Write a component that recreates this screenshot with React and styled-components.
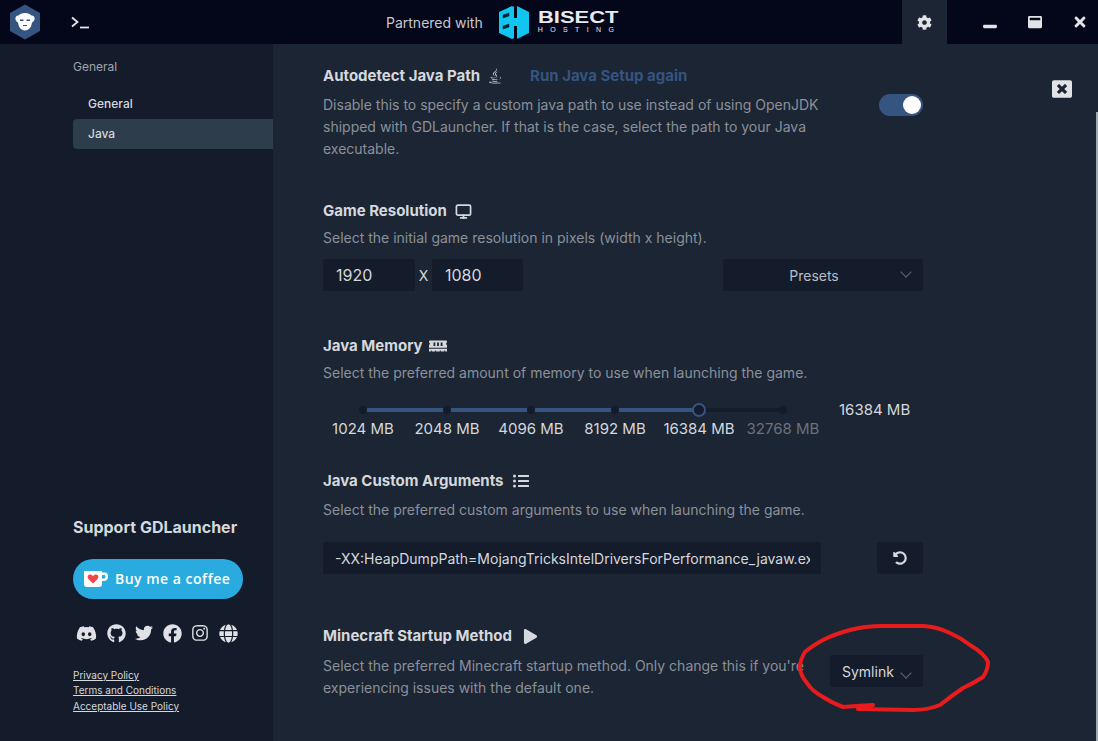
import React from 'react';
import styled, { createGlobalStyle } from 'styled-components';
import {
  FaCog, FaDiscord, FaFacebook, FaGithub, FaGlobe, FaInstagram, FaJava, FaListUl, FaMemory,
  FaPlay, FaTimes, FaTwitter, FaUndoAlt, FaWindowClose, FaWindowMaximize, FaWindowMinimize,
} from 'react-icons/fa';
import { FiMonitor } from 'react-icons/fi';

const GlobalStyle = createGlobalStyle`
  html, body { margin: 0; padding: 0; height: 100%; overflow: hidden; background: #1b2533; }
  * { box-sizing: border-box; }
  #root { height: 100%; font-family: Inter, "Liberation Sans", sans-serif; }
`;

const memorySteps = ['1024 MB', '2048 MB', '4096 MB', '8192 MB', '16384 MB', '32768 MB'];

const App = () => (
  <Page>
    <GlobalStyle />
    <TopBar>
      <TopLeft>
        <Logo />
        <Prompt />
      </TopLeft>
      <Partner>
        <PartnerText>Partnered with</PartnerText>
        <BisectIcon />
        <BisectName>
          <BisectTitle>BISECT</BisectTitle>
          <BisectSub>HOSTING</BisectSub>
        </BisectName>
      </Partner>
      <TopRight>
        <SettingsTab><FaCog size={15} /></SettingsTab>
        <WindowButton><FaWindowMinimize size={14} /></WindowButton>
        <WindowButton><FaWindowMaximize size={14} /></WindowButton>
        <WindowButton><FaTimes size={16} /></WindowButton>
      </TopRight>
    </TopBar>
    <Body>
      <Sidebar>
        <NavGroup>General</NavGroup>
        <NavItem>General</NavItem>
        <NavItem $active>Java</NavItem>
        <SideFooter>
          <SupportTitle>Support GDLauncher</SupportTitle>
          <CoffeeButton><CoffeeIcon />Buy me a coffee</CoffeeButton>
          <Socials>
            <FaDiscord size={21} />
            <FaGithub size={19} />
            <FaTwitter size={18} />
            <FaFacebook size={19} />
            <FaInstagram size={18} />
            <FaGlobe size={19} />
          </Socials>
          <Legal>Privacy Policy</Legal>
          <Legal>Terms and Conditions</Legal>
          <Legal>Acceptable Use Policy</Legal>
        </SideFooter>
      </Sidebar>
      <Main>
        <CloseBox><FaWindowClose size={20} /></CloseBox>
        <Content>
          <Section $height={135}>
            <Title $space={7} $iconGap={7}>Autodetect Java Path <FaJava size={16} /><SetupLink>Run Java Setup again</SetupLink></Title>
            <SplitRow>
              <Description $width={530}>Disable this to specify a custom java path to use instead of using OpenJDK shipped with GDLauncher. If that is the case, select the path to your Java executable.</Description>
              <Toggle><Knob /></Toggle>
            </SplitRow>
          </Section>
          <Section $height={135}>
            <Title $space={5} $iconGap={8}>Game Resolution <FiMonitor size={17} strokeWidth={2.4} /></Title>
            <Description>Select the initial game resolution in pixels (width x height).</Description>
            <ResolutionRow>
              <Field $width={92}>1920</Field>
              <Times>X</Times>
              <Field $width={91}>1080</Field>
              <Presets>Presets<Chevron $top={9} /></Presets>
            </ResolutionRow>
          </Section>
          <Section $height={135}>
            <Title $space={5} $iconGap={6}>Java Memory <FaMemory size={18} /></Title>
            <Description>Select the preferred amount of memory to use when launching the game.</Description>
            <MemoryRow>
              <Slider>
                <Rail />
                <Track />
                {[0, 1, 2, 3, 5].map((i) => <Dot key={i} style={{ left: `${i * 84}px` }} />)}
                <Handle />
                <Marks>
                  {memorySteps.map((m, i) => <Mark key={m} $muted={i === 5} style={{ left: `${i * 84}px` }}>{m}</Mark>)}
                </Marks>
              </Slider>
              <MemoryValue>16384 MB</MemoryValue>
            </MemoryRow>
          </Section>
          <Section $height={155}>
            <Title $space={7} $iconGap={10}>Java Custom Arguments <FaListUl size={16} /></Title>
            <Description>Select the preferred custom arguments to use when launching the game.</Description>
            <ArgsRow>
              <ArgsField readOnly value="-XX:HeapDumpPath=MojangTricksIntelDriversForPerformance_javaw.exe" />
              <UndoButton><FaUndoAlt size={14} /></UndoButton>
            </ArgsRow>
          </Section>
          <Section>
            <Title $space={8} $iconGap={11}>Minecraft Startup Method <FaPlay size={15} /></Title>
            <SplitRow>
              <Description $width={500}>Select the preferred Minecraft startup method. Only change this if you're experiencing issues with the default one.</Description>
              <MethodSelect>Symlink<Chevron $top={14} /></MethodSelect>
            </SplitRow>
          </Section>
        </Content>
        <ScrollThumb />
        <RedCircle viewBox="790 615 210 105" fill="none">
          <path d="M873 705Q855 706 843 707Q832 703 823 697Q812 691 807 683Q800 675 800 667Q800 660 805 652Q812 646 823 640Q835 634 850 630Q865 626 883 626L923 626Q938 627 950 633Q961 638 970 645Q985 654 988 662Q988 670 983 677Q974 683 963 688Q950 697 940 705Q928 710 913 710L858 709" stroke="#e81c1c" strokeWidth="4" strokeLinecap="round" strokeLinejoin="round" />
        </RedCircle>
      </Main>
    </Body>
  </Page>
);

export default App;

const Logo = () => (
  <svg width="32" height="36" viewBox="0 0 32 36">
    <path d="M16 0.5L31 9V27L16 35.5L1 27V9Z" fill="#35547f" />
    <path d="M16 9C12.5 9 11 10 9.5 11.5C7 11.5 6 13.5 6.5 15.5C7 17 8 18 9 18.5C9.5 22 11 26 16 26.5C21 26 22.5 22 23 18.5C24 18 25 17 25.5 15.5C26 13.5 25 11.5 22.5 11.5C21 10 19.5 9 16 9Z" fill="#fff" />
    <path d="M11 15.5H14.5V17H11ZM17.5 15.5H21V17H17.5ZM14 21H18V22H14Z" fill="#35547f" />
  </svg>
);

const Prompt = () => (
  <svg width="18" height="13" viewBox="0 0 18 13" fill="none">
    <path d="M1 1.5L6.5 6L1 10.5" stroke="#e4e6ea" strokeWidth="1.8" />
    <path d="M9 11.5H18" stroke="#e4e6ea" strokeWidth="1.8" />
  </svg>
);

const BisectIcon = () => (
  <svg width="32" height="35" viewBox="0 0 32 35">
    <path d="M14 1L1 7V28L14 34L16 33V21H19V34L31 28V7L19 1V13H16V2Z" fill="#10c5ef" />
    <path d="M5 10L11 8V11L5 13ZM5 21L11 19V22L5 24Z" fill="#0a2030" stroke="#0a2030" strokeWidth=".5" />
  </svg>
);

const CoffeeIcon = () => (
  <svg width="24" height="16" viewBox="0 0 24 16">
    <path d="M0 0H18V1.5H21C23 1.5 24 3 24 5.5C24 8.5 22.5 10 19.5 10H18V13C18 15 17 16 15 16H3C1 16 0 15 0 13Z" fill="#fff" />
    <path d="M18 4V7.5H19.5C21 7.5 21.5 6.8 21.5 5.5C21.5 4.5 21 4 20 4Z" fill="#29abe0" />
    <path d="M9 12.5L4.5 8C3 6.5 3.5 3.8 5.8 3.5C7.2 3.4 8.3 4 9 5.2C9.7 4 10.8 3.4 12.2 3.5C14.5 3.8 15 6.5 13.5 8Z" fill="#f0474b" />
  </svg>
);

const Page = styled.div`
  height: 100vh;
  display: flex;
  flex-direction: column;
`;

const TopBar = styled.header`
  height: 44px;
  flex: none;
  position: relative;
  display: flex;
  align-items: center;
  justify-content: space-between;
  background: #040619;
`;

const TopLeft = styled.div`
  display: flex;
  align-items: center;
  gap: 30px;
  padding-left: 9px;
`;

const Partner = styled.div`
  position: absolute;
  left: 386px;
  top: 0;
  height: 44px;
  display: flex;
  align-items: center;
`;

const PartnerText = styled.span`
  font-size: 14px;
  color: #c5c9d0;
  margin-right: 15px;
`;

const BisectName = styled.div`
  display: flex;
  flex-direction: column;
  margin-left: 8px;
  color: #e8eaee;
`;

const BisectTitle = styled.span`
  font: 700 16px/14px "Liberation Sans", sans-serif;
  transform: scaleX(1.37);
  transform-origin: left;
`;

const BisectSub = styled.span`
  font: 400 7px/9px "Liberation Sans", sans-serif;
  letter-spacing: 7.4px;
`;

const TopRight = styled.div`
  display: flex;
  height: 100%;
  margin-right: -4px;
`;

const SettingsTab = styled.button`
  width: 45px;
  margin-right: 20px;
  border: 0;
  padding: 0;
  display: flex;
  align-items: center;
  justify-content: center;
  background: #1b2533;
  color: #e1e3e7;
`;

const WindowButton = styled.button`
  width: 45px;
  border: 0;
  padding: 0;
  display: flex;
  align-items: center;
  justify-content: center;
  background: transparent;
  color: #e1e3e7;
`;

const Body = styled.div`
  flex: 1;
  display: flex;
  min-height: 0;
`;

const Sidebar = styled.aside`
  width: 273px;
  flex: none;
  display: flex;
  flex-direction: column;
  padding: 15px 0 0 73px;
  background: #141b2b;
`;

const NavGroup = styled.div`
  font-size: 12px;
  line-height: 16px;
  color: #a0a5ad;
  margin-bottom: 14px;
`;

const NavItem = styled.div`
  height: 30px;
  display: flex;
  align-items: center;
  padding: 0 0 2px 15px;
  font-size: 12px;
  font-weight: 500;
  color: #d5d8dd;
  border-radius: 4px 0 0 4px;
  background: ${(p) => (p.$active ? '#2e3d4b' : 'transparent')};
`;

const SideFooter = styled.div`
  margin-top: auto;
  padding-bottom: 27px;
  display: flex;
  flex-direction: column;
  align-items: flex-start;
`;

const SupportTitle = styled.div`
  font-size: 16px;
  line-height: 20px;
  font-weight: 700;
  color: #d5d8dd;
  margin-bottom: 22px;
`;

const CoffeeButton = styled.div`
  width: 170px;
  height: 40px;
  border-radius: 20px;
  display: flex;
  align-items: center;
  gap: 7px;
  padding-left: 11px;
  font: 600 14px "Open Sans", sans-serif;
  letter-spacing: 0.5px;
  color: #fff;
  background: #29abe0;
`;

const Socials = styled.div`
  display: flex;
  align-items: center;
  gap: 9.5px;
  margin: 24px 0 24px 3px;
  color: #dfe1e5;
`;

const Legal = styled.a`
  font-size: 10px;
  line-height: 15.5px;
  color: #d5d8dd;
  text-decoration: underline;
`;

const Main = styled.main`
  flex: 1;
  position: relative;
  min-width: 0;
  background: #1b2533;
`;

const CloseBox = styled.div`
  position: absolute;
  left: 779px;
  top: 35px;
  display: flex;
  color: #e1e3e7;
`;

const ScrollThumb = styled.div`
  position: absolute;
  right: 0;
  top: 68px;
  bottom: 0;
  width: 2px;
  background: #a0a8b0;
`;

const Content = styled.div`
  width: 600px;
  margin-left: 50px;
  padding-top: 21px;
`;

const Section = styled.section`
  height: ${(p) => (p.$height ? `${p.$height}px` : 'auto')};
`;

const Title = styled.h2`
  margin: 0 0 ${(p) => p.$space}px;
  display: flex;
  align-items: center;
  gap: ${(p) => p.$iconGap}px;
  font-size: 15px;
  line-height: 22px;
  font-weight: 700;
  color: #d5d8dd;
`;

const SetupLink = styled.span`
  margin-left: 20px;
  font-size: 15px;
  font-weight: 700;
  color: #35547f;
`;

const Description = styled.p`
  margin: 0;
  max-width: ${(p) => (p.$width ? `${p.$width}px` : 'none')};
  font-size: 14px;
  line-height: 22px;
  color: #8b909a;
`;

const SplitRow = styled.div`
  display: flex;
  justify-content: space-between;
  align-items: flex-start;
`;

const Toggle = styled.div`
  width: 44px;
  height: 22px;
  border-radius: 11px;
  background: #35547f;
  position: relative;
`;

const Knob = styled.span`
  position: absolute;
  right: 2px;
  top: 2px;
  width: 18px;
  height: 18px;
  border-radius: 50%;
  background: #fff;
`;

const ResolutionRow = styled.div`
  display: flex;
  align-items: center;
  margin-top: 10px;
`;

const Field = styled.div`
  width: ${(p) => p.$width}px;
  height: 32px;
  display: flex;
  align-items: center;
  padding-left: 13px;
  font-size: 16px;
  color: #d5d8dd;
  border-radius: 2px;
  background: #141b2b;
`;

const Times = styled.span`
  width: 17px;
  text-align: center;
  font-size: 14px;
  color: #d5d8dd;
`;

const Presets = styled.div`
  margin-left: auto;
  width: 200px;
  height: 32px;
  padding-right: 18px;
  display: flex;
  align-items: center;
  justify-content: center;
  position: relative;
  font-size: 14px;
  color: #b9bdc4;
  border-radius: 2px;
  background: #141b2b;
`;

const Chevron = styled.span`
  position: absolute;
  right: 13px;
  top: ${(p) => p.$top}px;
  width: 8px;
  height: 8px;
  border-right: 1px solid #5f6570;
  border-bottom: 1px solid #5f6570;
  transform: rotate(45deg);
`;

const MemoryRow = styled.div`
  display: flex;
  margin-top: 17px;
`;

const Slider = styled.div`
  position: relative;
  width: 516px;
  height: 42px;
  margin-left: 40px;
`;

const Rail = styled.div`
  position: absolute;
  left: 0;
  top: 7px;
  width: 420px;
  height: 4px;
  background: #141b2b;
`;

const Track = styled.div`
  position: absolute;
  left: 0;
  top: 7px;
  width: 336px;
  height: 4px;
  background: #35547f;
`;

const Dot = styled.span`
  position: absolute;
  top: 5px;
  width: 8px;
  height: 8px;
  margin-left: -4px;
  border-radius: 50%;
  background: #141b2b;
`;

const Handle = styled.span`
  position: absolute;
  left: 336px;
  top: 2px;
  width: 14px;
  height: 14px;
  margin-left: -7px;
  border-radius: 50%;
  border: 2px solid #35547f;
  background: #141b2b;
`;

const Marks = styled.div`
  position: absolute;
  left: 0;
  right: 0;
  top: 18px;
`;

const Mark = styled.span`
  position: absolute;
  transform: translateX(-50%);
  white-space: nowrap;
  font-size: 15px;
  line-height: 20px;
  color: ${(p) => (p.$muted ? '#6d717a' : '#d5d8dd')};
`;

const MemoryValue = styled.div`
  margin-left: -40px;
  font-size: 15px;
  line-height: 18px;
  color: #d5d8dd;
  white-space: nowrap;
`;

const ArgsRow = styled.div`
  display: flex;
  justify-content: space-between;
  margin-top: 21px;
`;

const ArgsField = styled.input`
  width: 498px;
  height: 32px;
  border: 0;
  outline: none;
  padding: 0 11px 0 12px;
  font-family: Inter, "Liberation Sans", sans-serif;
  font-size: 14px;
  color: #d5d8dd;
  border-radius: 2px;
  background: #141b2b;
`;

const UndoButton = styled.button`
  width: 46px;
  height: 32px;
  border: 0;
  padding: 0;
  display: flex;
  align-items: center;
  justify-content: center;
  color: #d5d8dd;
  border-radius: 2px;
  background: #141b2b;
`;

const MethodSelect = styled.div`
  position: relative;
  width: 93px;
  height: 32px;
  display: flex;
  align-items: center;
  padding-left: 12px;
  font-size: 14px;
  color: #d5d8dd;
  border-radius: 2px;
  background: #141b2b;
`;

const RedCircle = styled.svg`
  position: absolute;
  left: 517px;
  top: 571px;
  width: 210px;
  height: 105px;
  pointer-events: none;
`;
